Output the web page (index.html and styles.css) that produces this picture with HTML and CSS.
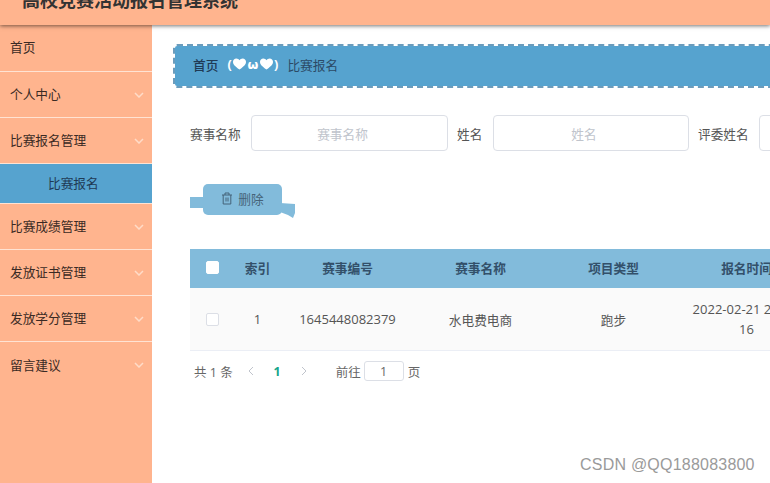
FILE: index.html
```html
<!DOCTYPE html>
<html lang="zh-CN">
<head>
<meta charset="utf-8">
<title>高校竞赛活动报名管理系统</title>
<link rel="stylesheet" href="styles.css">
</head>
<body>
<div class="app">
  <header class="topbar"><div class="title">高校竞赛活动报名管理系统</div></header>
  <div class="layout">
    <aside class="side">
      <div class="item first"><span>首页</span></div>
      <div class="item"><span>个人中心</span><svg class="chev" viewBox="0 0 10 6"><path d="M1 1l4 4 4-4"/></svg></div>
      <div class="item"><span>比赛报名管理</span><svg class="chev" viewBox="0 0 10 6"><path d="M1 1l4 4 4-4"/></svg></div>
      <div class="sub">比赛报名</div>
      <div class="item"><span>比赛成绩管理</span><svg class="chev" viewBox="0 0 10 6"><path d="M1 1l4 4 4-4"/></svg></div>
      <div class="item"><span>发放证书管理</span><svg class="chev" viewBox="0 0 10 6"><path d="M1 1l4 4 4-4"/></svg></div>
      <div class="item"><span>发放学分管理</span><svg class="chev" viewBox="0 0 10 6"><path d="M1 1l4 4 4-4"/></svg></div>
      <div class="item last"><span>留言建议</span><svg class="chev" viewBox="0 0 10 6"><path d="M1 1l4 4 4-4"/></svg></div>
    </aside>
    <main class="main">
      <nav class="crumb">
        <span class="home">首页</span>
        <span class="sep">(<svg class="heart" viewBox="0 0 14 12"><path d="M7 12C2 8.500 0 6.500 0 3.600 0 1.500 1.600 0 3.600 0 5 0 6.300.8 7 2c.7-1.200 2-2 3.400-2C12.400 0 14 1.500 14 3.600 14 6.500 12 8.500 7 12z"/></svg><span class="omega">ω</span><svg class="heart" viewBox="0 0 14 12"><path d="M7 12C2 8.500 0 6.500 0 3.600 0 1.500 1.600 0 3.600 0 5 0 6.300.8 7 2c.7-1.200 2-2 3.400-2C12.400 0 14 1.500 14 3.600 14 6.500 12 8.500 7 12z"/></svg>)</span>
        <span class="cur">比赛报名</span>
      </nav>
      <form class="filters">
        <label class="lab">赛事名称</label><div class="inp w197">赛事名称</div>
        <label class="lab short">姓名</label><div class="inp w196">姓名</div>
        <label class="lab gap">评委姓名</label><div class="inp w197">评委姓名</div>
      </form>
      <div class="actions">
        <div class="ribbon">
          <svg class="tail-l" viewBox="0 0 14 12"><path d="M0 1h14v11H0z"/></svg>
          <div class="btn">
            <svg class="trash" viewBox="0 0 12 13"><path d="M1 3h10M4 3V1h4v2M2.200 3v9h7.600V3M5 5.500v4M7 5.500v4"/></svg>
            <span>删除</span>
          </div>
          <svg class="tail-r" viewBox="0 0 15 16"><path d="M0 1l15 1v9l-2 5-5-3-8-3z"/></svg>
        </div>
      </div>
      <div class="table">
        <div class="row head">
          <div class="c"><b class="box on"></b></div>
          <div class="c">索引</div>
          <div class="c">赛事编号</div>
          <div class="c">赛事名称</div>
          <div class="c">项目类型</div>
          <div class="c">报名时间</div>
        </div>
        <div class="row body">
          <div class="c"><b class="box"></b></div>
          <div class="c digits">1</div>
          <div class="c digits">1645448082379</div>
          <div class="c">水电费电商</div>
          <div class="c">跑步</div>
          <div class="c digits wrap">2022-02-21 21:34:<br>16</div>
        </div>
      </div>
      <div class="pager">
        <span class="total">共 1 条</span>
        <svg class="arr" viewBox="0 0 6 10"><path d="M5 1L1 5l4 4"/></svg>
        <span class="num">1</span>
        <svg class="arr" viewBox="0 0 6 10"><path d="M1 1l4 4-4 4"/></svg>
        <span class="goto">前往</span><span class="page">1</span><span>页</span>
      </div>
    </main>
  </div>
  <div class="mark">CSDN @QQ188083800</div>
</div>
</body>
</html>
```
FILE: styles.css
```css
* { box-sizing: border-box; }
html, body { margin: 0; padding: 0; height: 100%; overflow: hidden; background: #fff; }
body { font-family: "Open Sans", "Noto Sans CJK SC", sans-serif; color: #444; font-size: 12.7px; }
.app { width: 770px; height: 483px; overflow: hidden; position: relative; }
.topbar { height: 25px; background: #ffb48e; box-shadow: 0 1px 4px rgba(0,0,0,.55); position: relative; z-index: 2; display: flex; align-items: flex-end; padding: 0 0 16px 22px; overflow: hidden; }
.title { font-size: 18px; line-height: 18px; font-weight: 700; color: #333; white-space: nowrap; }
.layout { display: flex; height: 458px; }
.side { width: 152px; flex: none; background: #ffb48e; display: flex; flex-direction: column; }
.item { height: 46px; flex: none; border-bottom: 1px solid #ffe3d3; padding: 0 8px 2px 10px; display: flex; align-items: center; justify-content: space-between; color: #3a2a24; }
.item.first { height: 47px; padding-bottom: 4px; }
.item.last { border-bottom: 0; }
.chev { width: 10px; height: 6px; fill: none; stroke: #ffdcc8; stroke-width: 1.500; margin-top: 2px; }
.sub { height: 40px; flex: none; background: #56a3cf; border-bottom: 1px solid #ffe3d3; display: flex; align-items: center; padding: 0 0 3px 48px; color: #1f3a55; }
.main { flex: 1; min-width: 0; padding: 19px 0 0 21px; overflow: hidden; }
.crumb { width: 640px; height: 44px; background: #56a3cf; background-clip: padding-box; border: 2px dashed #6b9cbc; border-radius: 4px; display: flex; align-items: center; padding: 0 0 4px 18px; color: #1f3a55; }
.home { font-weight: 500; }
.sep { margin: 0 9px; color: #fff; font-weight: 700; white-space: nowrap; display: flex; align-items: center; width: 51px; gap: 1px; justify-content: space-between; }
.heart { width: 13px; height: 12px; fill: #fff; flex: none; }
.omega { font-family: "DejaVu Sans", sans-serif; font-size: 12.500px; }
.cur { color: #2c4a66; }
.filters { margin: 27px 0 0 17px; width: 640px; display: flex; align-items: center; height: 36px; }
.lab { flex: none; width: 61px; color: #555; white-space: nowrap; }
.lab.short { width: 36px; margin-left: 9px; }
.lab.gap { margin-left: 9px; }
.inp { flex: none; height: 36px; border: 1px solid #dcdfe6; border-radius: 4px; background: #fff; color: #c0c4cc; display: flex; align-items: center; justify-content: center; padding-right: 14px; }
.w197 { width: 197px; }
.w196 { width: 196px; }
.actions { margin: 33px 0 0 17px; height: 33px; }
.ribbon { display: flex; align-items: flex-start; width: 105px; position: relative; }
.btn { width: 79px; height: 31px; margin-left: 13px; padding-bottom: 3px; background: #82bbdb; border-radius: 5px; display: flex; align-items: center; justify-content: center; gap: 5px; color: #456379; position: relative; z-index: 1; }
.trash { width: 12px; height: 13px; fill: none; stroke: #456379; stroke-width: 1; }
.tail-l { position: absolute; left: 0; top: 12px; width: 14px; height: 12px; fill: #82bbdb; }
.tail-r { position: absolute; left: 90px; top: 18px; width: 15px; height: 16px; fill: #82bbdb; }
.table { margin: 32px 0 0 17px; width: 640px; }
.row { display: grid; grid-template-columns: 44px 47px 133px 133px 133px 133px; }
.c { display: flex; align-items: center; justify-content: center; text-align: center; white-space: nowrap; }
.head { height: 39px; background: #82bbdb; color: #33506a; font-weight: 700; padding-bottom: 2px; }
.body { height: 63px; background: #fafafa; border-bottom: 1px solid #ebeef5; color: #555; }
.digits { font-size: 13px; }
.wrap { line-height: 20px; }
.box { display: block; width: 13px; height: 13px; border: 1px solid #dcdfe6; border-radius: 2px; background: #fff; }
.box.on { border-color: #fff; }
.pager { margin: 9px 0 0 21px; height: 22px; display: flex; align-items: center; color: #666; font-size: 12.5px; }
.total { margin-right: 15px; }
.arr { width: 6px; height: 10px; fill: none; stroke: #c0c4cc; stroke-width: 1; }
.num { width: 47px; text-align: center; color: #17a58a; font-weight: 700; }
.goto { margin-left: 29px; }
.page { width: 40px; height: 20px; margin: 0 4px 0 3px; border: 1px solid #dcdfe6; border-radius: 3px; display: flex; align-items: center; justify-content: center; }
.mark { position: absolute; left: 580px; top: 456px; font-family: "Liberation Sans", sans-serif; font-size: 16px; line-height: 18px; color: #9a9a9a; letter-spacing: .22px; white-space: nowrap; }
```
